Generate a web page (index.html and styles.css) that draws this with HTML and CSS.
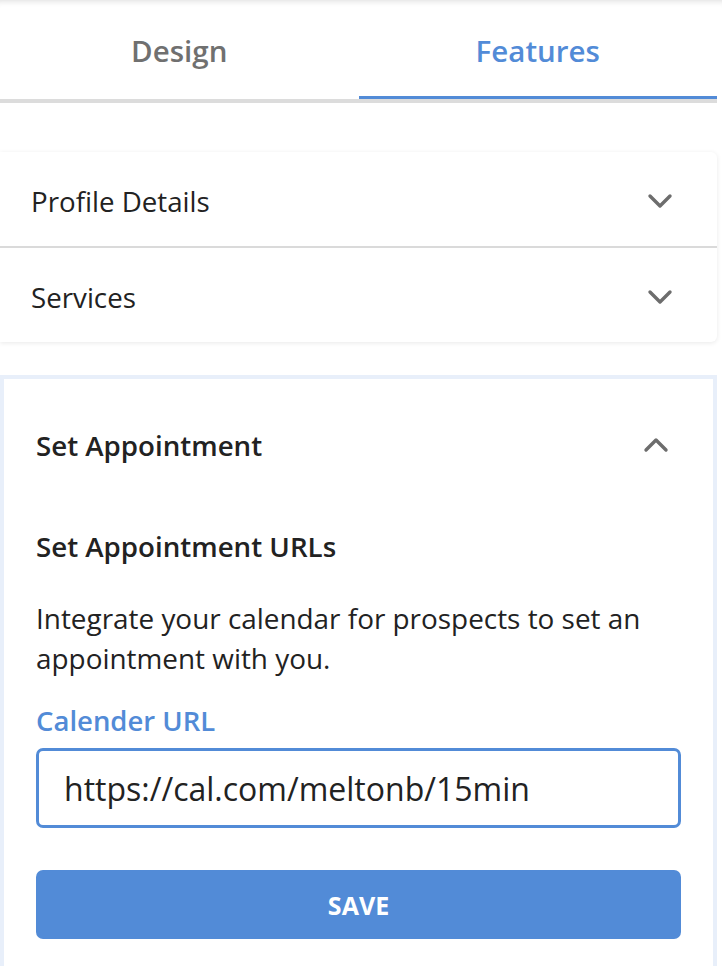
FILE: index.html
```html
<!DOCTYPE html>
<html lang="en">
<head>
<meta charset="utf-8">
<title>Features</title>
<link rel="stylesheet" href="styles.css">
</head>
<body>
<div class="app">
  <nav class="tabs">
    <div class="tab">Design</div>
    <div class="tab tab-active">Features</div>
  </nav>

  <section class="card">
    <div class="row">
      <span class="row-title">Profile Details</span>
      <svg class="chev" width="26" height="16" viewBox="0 0 26 16"><polyline points="3,3 13,13 23,3"/></svg>
    </div>
    <div class="row">
      <span class="row-title">Services</span>
      <svg class="chev" width="26" height="16" viewBox="0 0 26 16"><polyline points="3,3 13,13 23,3"/></svg>
    </div>
  </section>

  <section class="panel">
    <div class="panel-head">
      <span class="panel-title">Set Appointment</span>
      <svg class="chev" width="26" height="16" viewBox="0 0 26 16"><polyline points="3,13 13,3 23,13"/></svg>
    </div>
    <div class="panel-body">
      <h3 class="sub-title">Set Appointment URLs</h3>
      <p class="desc">Integrate your calendar for prospects to set an appointment with you.</p>
      <label class="field-label" for="cal">Calender URL</label>
      <input id="cal" class="field" type="text" value="https://cal.com/meltonb/15min">
      <button class="save" type="button">SAVE</button>
    </div>
  </section>
</div>
</body>
</html>
```
FILE: styles.css
```css
* { box-sizing: border-box; }

html, body {
  margin: 0;
  padding: 0;
  background: #ffffff;
}

body {
  font-family: "Open Sans", "Noto Sans", "Liberation Sans", sans-serif;
  color: #222222;
  box-shadow: inset 0 7px 6px -6px rgba(0, 0, 0, 0.14);
  min-height: 100vh;
}

.app {
  width: 717px;
  padding-bottom: 40px;
}

/* Tabs */
.tabs {
  display: flex;
  border-bottom: 4px solid #dcdcdc;
}

.tab {
  flex: 1 1 0;
  text-align: center;
  font-size: 29.5px;
  font-weight: 600;
  color: #707070;
  line-height: 40px;
  padding: 31px 0 25px;
  border-bottom: 3px solid transparent;
}

.tab-active {
  color: #528bd7;
  border-bottom-color: #528bd7;
}

/* Collapsed card */
.card {
  margin-top: 49px;
  background: #fff;
  border-radius: 0 6px 6px 0;
  box-shadow: 0 1px 5px rgba(0, 0, 0, 0.09);
}

.row {
  display: flex;
  align-items: center;
  justify-content: space-between;
  padding: 29px 44px 25px 31px;
  line-height: 40px;
}

.row + .row {
  border-top: 2px solid #dadada;
}

.row-title {
  font-size: 27.7px;
  font-weight: 400;
  color: #222;
}

.chev {
  display: block;
  flex: none;
}

.chev polyline {
  fill: none;
  stroke: #6d6d6d;
  stroke-width: 3.4;
  stroke-linecap: round;
  stroke-linejoin: round;
}

/* Expanded panel */
.panel {
  margin-top: 33px;
  border: 4px solid #e8effa;
  border-bottom: none;
  background: #fff;
  padding-bottom: 60px;
}

.panel-head {
  display: flex;
  align-items: center;
  justify-content: space-between;
  padding: 46px 44px 0 32px;
  line-height: 40px;
}

.panel-title {
  font-size: 27.7px;
  font-weight: 600;
  color: #222;
}

.panel-body {
  padding: 0 32px;
  display: flex;
  flex-direction: column;
}

.sub-title {
  margin: 61px 0 0;
  font-size: 27.7px;
  font-weight: 600;
  line-height: 40px;
  color: #222;
}

.desc {
  margin: 32px 0 0;
  font-size: 27.9px;
  font-weight: 400;
  line-height: 40px;
  color: #222;
}

.field-label {
  margin-top: 23px;
  font-size: 27.5px;
  font-weight: 600;
  line-height: 40px;
  color: #528bd7;
}

.field {
  margin-top: 7px;
  width: 100%;
  height: 80px;
  border: 3px solid #528bd7;
  border-radius: 7px;
  padding: 0 25px;
  font-family: "Open Sans", "Noto Sans", "Liberation Sans", sans-serif;
  font-size: 32px;
  color: #222;
  background: #fff;
  outline: none;
}

.save {
  margin-top: 42px;
  width: 100%;
  height: 69px;
  border: none;
  border-radius: 7px;
  background: #528bd7;
  color: #fff;
  font-family: "Open Sans", "Noto Sans", "Liberation Sans", sans-serif;
  font-size: 25px;
  font-weight: 700;
  letter-spacing: 0;
}
```
